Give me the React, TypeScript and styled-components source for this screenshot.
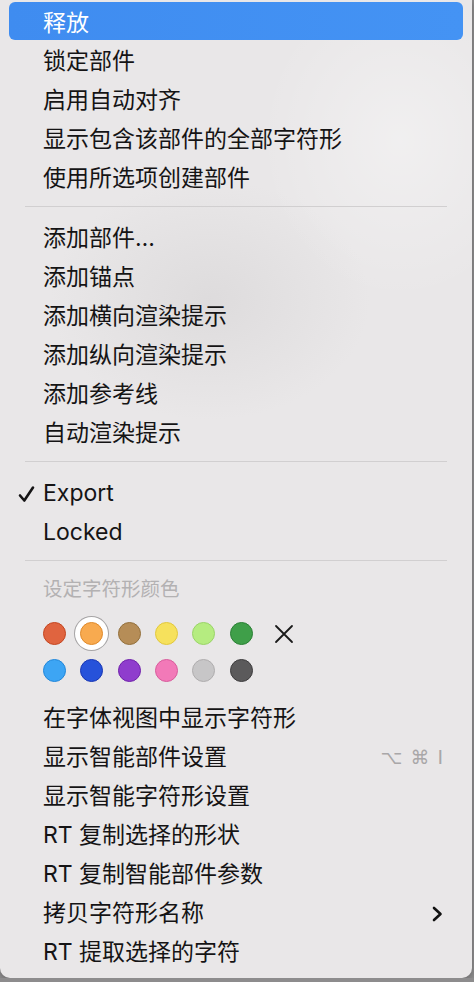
import React from 'react';
import styled, { createGlobalStyle } from 'styled-components';

const GlobalStyle = createGlobalStyle`
  html, body {
    margin: 0;
    padding: 0;
    background: #8d8c8d;
  }
  body {
    font-family: "Inter", "Noto Sans CJK SC", "Noto Sans", sans-serif;
    -webkit-font-smoothing: antialiased;
  }
`;

const Menu = styled.div`
  width: 472px;
  padding: 1px 0 8px;
  box-sizing: border-box;
  border-radius: 0 0 10px 10px;
  background:
    radial-gradient(ellipse 160px 120px at 210px 300px, rgba(200, 198, 199, 0.35), transparent),
    radial-gradient(ellipse 140px 160px at 400px 140px, rgba(255, 255, 255, 0.35), transparent),
    #e9e7e8;
  box-shadow: 0 2px 6px rgba(0, 0, 0, 0.25);
  color: #151415;
`;

const Item = styled.div<{ $active?: boolean }>`
  height: ${p => (p.$active ? '38px' : '39px')};
  margin: ${p => (p.$active ? '1px 9px 0' : '0 9px')};
  padding: 4px 20px 0 9px;
  box-sizing: border-box;
  display: flex;
  align-items: center;
  font-size: 23px;
  line-height: 1;
  border-radius: 6px;
  background: ${p => (p.$active ? 'linear-gradient(90deg, #3f8cf0, #4493f4)' : 'transparent')};
  color: ${p => (p.$active ? '#ffffff' : 'inherit')};
`;

const Gutter = styled.span`
  width: 25px;
  flex: none;
  display: flex;
  align-items: center;
`;

const Label = styled.span`
  flex: 1;
  white-space: nowrap;
`;

const Shortcut = styled.span`
  display: flex;
  align-items: center;
  gap: 8px;
  color: #a9a7a8;
  font-family: "DejaVu Sans", "Noto Sans", sans-serif;
  font-size: 19px;
`;

const Separator = styled.div`
  height: 21px;
  display: flex;
  align-items: center;
  &::after {
    content: '';
    flex: 1;
    margin: 0 25px;
    height: 1px;
    background: #d1cfd0;
  }
`;

const Header = styled.div`
  height: 30px;
  display: flex;
  align-items: center;
  padding: 3px 0 0 43px;
  box-sizing: border-box;
  font-size: 19.5px;
  color: #b3b1b2;
`;

const Swatches = styled.div`
  display: grid;
  grid-template-columns: repeat(6, 37.3px) 48px;
  grid-auto-rows: 37px;
  padding: 14px 0 8px 36px;
`;

const Cell = styled.div`
  display: flex;
  align-items: center;
  justify-content: center;
`;

const Swatch = styled.span<{ $fill: string; $edge: string; $selected?: boolean }>`
  width: 23px;
  height: 23px;
  box-sizing: border-box;
  border-radius: 50%;
  background: ${p => p.$fill};
  border: 1px solid ${p => p.$edge};
  box-shadow: ${p => (p.$selected ? '0 0 0 5px #ffffff, 0 0 0 6px #a6a4a5' : 'none')};
`;

const Check = () => (
  <svg width="17" height="18" viewBox="0 0 17 18">
    <path d="M2 10.5 L6.3 15.5 L15 2.5" fill="none" stroke="#151415" strokeWidth="2.6" strokeLinecap="round" strokeLinejoin="round" />
  </svg>
);

const Chevron = () => (
  <svg width="12" height="18" viewBox="0 0 12 18">
    <path d="M3 3 L9.5 9 L3 15" fill="none" stroke="#111" strokeWidth="2.6" strokeLinecap="round" strokeLinejoin="round" />
  </svg>
);

const Cross = () => (
  <svg width="20" height="20" viewBox="0 0 20 20">
    <path d="M2 2 L18 18 M18 2 L2 18" stroke="#1a1a1a" strokeWidth="1.8" strokeLinecap="round" />
  </svg>
);

type Row = { label: string; active?: boolean; checked?: boolean; shortcut?: string[]; submenu?: boolean };

const top: Row[] = [
  { label: '释放', active: true },
  { label: '锁定部件' },
  { label: '启用自动对齐' },
  { label: '显示包含该部件的全部字符形' },
  { label: '使用所选项创建部件' },
];

const add: Row[] = [
  { label: '添加部件…' },
  { label: '添加锚点' },
  { label: '添加横向渲染提示' },
  { label: '添加纵向渲染提示' },
  { label: '添加参考线' },
  { label: '自动渲染提示' },
];

const flags: Row[] = [{ label: 'Export', checked: true }, { label: 'Locked' }];

const bottom: Row[] = [
  { label: '在字体视图中显示字符形' },
  { label: '显示智能部件设置', shortcut: ['⌥', '⌘', 'I'] },
  { label: '显示智能字符形设置' },
  { label: 'RT 复制选择的形状' },
  { label: 'RT 复制智能部件参数' },
  { label: '拷贝字符形名称', submenu: true },
  { label: 'RT 提取选择的字符' },
];

const colors = [
  ['#e0643f', '#c4451f'],
  ['#f8aa4f', '#e08a2a'],
  ['#b68d57', '#93703c'],
  ['#f6e15c', '#e2c83c'],
  ['#b5ec80', '#9ad468'],
  ['#3f9f49', '#2a8034'],
  ['#3da5f4', '#2187da'],
  ['#2652da', '#1836b4'],
  ['#8f3dcd', '#7022ab'],
  ['#f279b8', '#d85c9c'],
  ['#c7c6c7', '#afadae'],
  ['#5b5a5b', '#3d3c3d'],
];

const renderRows = (rows: Row[]) =>
  rows.map(r => (
    <Item key={r.label} $active={r.active}>
      <Gutter>{r.checked && <Check />}</Gutter>
      <Label>{r.label}</Label>
      {r.shortcut && (
        <Shortcut>
          {r.shortcut.map(k => (
            <span key={k}>{k}</span>
          ))}
        </Shortcut>
      )}
      {r.submenu && <Chevron />}
    </Item>
  ));

const App: React.FC = () => {
  return (
    <>
      <GlobalStyle />
      <Menu>
        {renderRows(top)}
        <Separator />
        {renderRows(add)}
        <Separator />
        {renderRows(flags)}
        <Separator />
        <Header>设定字符形颜色</Header>
        <Swatches>
          {colors.slice(0, 6).map(([fill, edge], i) => (
            <Cell key={fill}>
              <Swatch $fill={fill} $edge={edge} $selected={i === 1} />
            </Cell>
          ))}
          <Cell>
            <Cross />
          </Cell>
          {colors.slice(6).map(([fill, edge]) => (
            <Cell key={fill}>
              <Swatch $fill={fill} $edge={edge} />
            </Cell>
          ))}
        </Swatches>
        {renderRows(bottom)}
      </Menu>
    </>
  );
};

export default App;
